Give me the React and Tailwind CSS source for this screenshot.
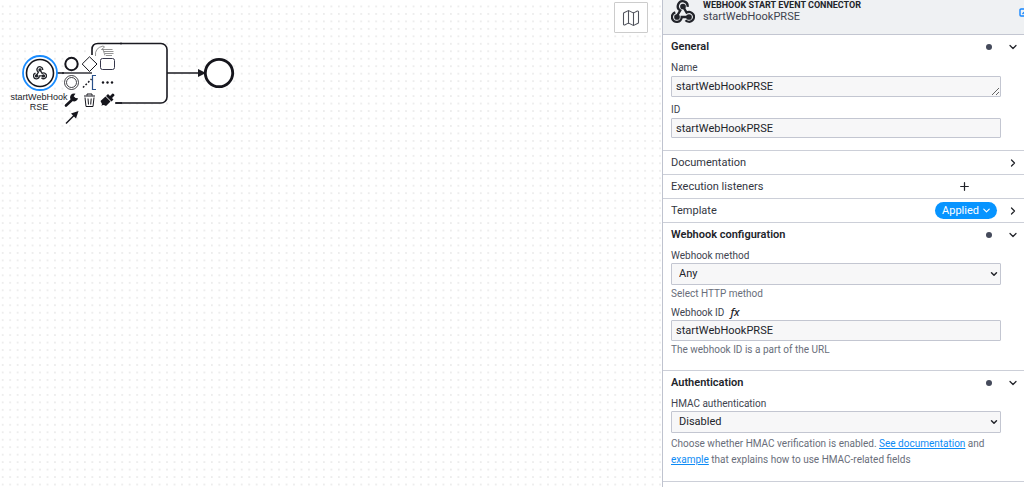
import { ChevronDown, ChevronRight, Plus, Map } from "lucide-react";

const fieldClass =
  "block w-full rounded-[1px] border border-[#c3c6d1] bg-[#f7f7f8] text-[11px] text-[#22242a] outline-none";
const rowClass = "flex h-6 items-center border-b border-[#cccfd8] pl-2 text-[11px]";
const rowTextClass = "flex-1 pt-[2px] text-[#33363f]";
const linkClass = "text-[#0d8bf5] underline";

function WebhookIcon({ className }) {
  return (
    <svg className={className} viewBox="0 0 24 24" fill="none" stroke="currentColor" strokeWidth="2.3" aria-hidden="true">
      <path d="M16.6 6.8A4.9 4.9 0 1 0 9.3 10.4L6 16" />
      <path d="M12 6.5L15.6 12.6A4.9 4.9 0 1 1 14.5 20.2" />
      <path d="M18 17H10.7A4.9 4.9 0 1 1 4.3 12.4" />
      <circle cx="12" cy="6.5" r="1.7" fill="currentColor" />
      <circle cx="6" cy="17" r="1.7" fill="currentColor" />
      <circle cx="18" cy="17" r="1.7" fill="currentColor" />
    </svg>
  );
}

function DotGrid() {
  return (
    <svg className="absolute inset-0 size-full" aria-hidden="true">
      <defs>
        <pattern id="grid-dots" x="-1" y="2.700" width="7.470" height="7.470" patternUnits="userSpaceOnUse">
          <circle cx="3.700" cy="3.700" r=".65" fill="#d0d0d0" />
        </pattern>
      </defs>
      <rect width="100%" height="100%" fill="url(#grid-dots)" />
    </svg>
  );
}

function Diagram() {
  return (
    <svg className="absolute left-0 top-0" width="260" height="130" viewBox="0 0 260 130" role="img" aria-label="Process diagram">
      <rect x="92" y="43.500" width="75" height="59.500" rx="6" fill="#fff" stroke="#1b1b22" strokeWidth="1.600" />
      <path d="M54 73H92M167 73H200" stroke="#1b1b22" strokeWidth="1.500" />
      <path d="M198 69L206 73L198 77Z" fill="#1b1b22" />
      <circle cx="219" cy="73" r="13.700" fill="#fff" stroke="#15151c" strokeWidth="2.800" />
      <circle cx="40" cy="73" r="17" fill="#fff" stroke="#1a8cff" strokeWidth="1.800" />
      <circle cx="40" cy="73" r="13.500" fill="#fff" stroke="#15151c" strokeWidth="1.600" />
    </svg>
  );
}

function ContextPad() {
  return (
    <svg className="absolute left-[62px] top-[42px]" width="60" height="84" viewBox="62 42 60 84" fill="none" stroke="#15151c" aria-label="Element tools" role="img">
      <path d="M88 40H120V90H115V110H64V56H88Z" fill="#fff" stroke="none" />
      <path d="M92 55V49.500Q92 43.500 98 43.500H122M116 103H122" strokeWidth="1.600" />
      <path d="M62 73H92" strokeWidth="1.300" />
      <path d="M95.500 56Q94.500 48 103 46L104.500 47L101.500 49.500H112.500M104 51.500H113.500M105 53.500H113.500M106 55.500H112M103 49.500L105 55.500" stroke="#666" strokeWidth=".7" />
      <circle cx="71.500" cy="64" r="6.200" fill="#fff" strokeWidth="2" />
      <path d="M89.500 56.800L97 64L89.500 71.500L82.200 64Z" fill="#fff" />
      <rect x="100.500" y="58.500" width="14" height="11" rx="2" fill="#fff" stroke="#35364a" />
      <circle cx="71.500" cy="82.500" r="7" fill="#fff" strokeWidth=".8" />
      <circle cx="71.500" cy="82.500" r="5" strokeWidth=".8" />
      <path d="M83 87.500L91.500 79" strokeDasharray="1.800 1.800" strokeWidth="1.500" />
      <path d="M96 75.500H92.500V89.500H96" stroke="#28508a" strokeWidth="1.200" />
      <g fill="#15151c" stroke="none">
        <circle cx="103" cy="82.500" r="1.200" />
        <circle cx="107.500" cy="82.500" r="1.200" />
        <circle cx="112" cy="82.500" r="1.200" />
      </g>
      <path d="M66 105.500L73 99" strokeWidth="2.600" strokeLinecap="round" />
      <path d="M75.500 93.700A4 4 0 1 0 78 98.200L75.500 98L73.700 96.200Z" fill="#15151c" stroke="none" />
      <path d="M84 96H95M87 95.500V94H92V95.500M85 97.500L86 106.500H93L94 97.500M88 98.500L88.500 104.500M91.200 98.500L90.700 104.500" />
      <path d="M100.500 101L105.500 96.500L110.500 101.500L106 106Q103 104 101.500 106Q102.500 103.500 100.500 101Z" fill="#15151c" stroke="none" />
      <path d="M106 96L108 94L110 96L112.500 93.500Q114.500 93.500 114.500 95.500L112 98L113.500 99.500L111.500 101.500Z" fill="#15151c" stroke="none" />
      <path d="M66 123.500L75 114.500" strokeWidth="1.400" />
      <path d="M78.500 111L76 118.500L71 113.500Z" fill="#15151c" stroke="none" />
    </svg>
  );
}

function Dot() {
  return <span className="size-[6px] rounded-full bg-[#454a5b]" />;
}

function OpenGroup({ title, className, children }) {
  return (
    <section className={"border-b border-[#cccfd8] pl-2 " + className}>
      <div className="flex h-6 items-center pr-[5px]">
        <h2 className="flex-1 text-[11px] font-semibold text-[#22242a]">{title}</h2>
        <Dot />
        <button aria-label={"Collapse " + title} className="ml-[15px]">
          <ChevronDown size={12} strokeWidth={2.5} />
        </button>
      </div>
      <div className="pr-[23px]">{children}</div>
    </section>
  );
}

function Label({ htmlFor, children }) {
  return <label htmlFor={htmlFor} className="block h-4 text-[10px] leading-[17px] text-[#40444f]">{children}</label>;
}

function Select({ id, value }) {
  return (
    <div className="relative">
      <select id={id} defaultValue={value} className={fieldClass + " h-[22px] appearance-none px-[7px] pt-[1px]"}>
        <option>{value}</option>
      </select>
      <ChevronDown size={10} strokeWidth={3.5} className="pointer-events-none absolute right-[2px] top-[6px]" />
    </div>
  );
}

export default function App() {
  return (
    <div className="flex h-screen overflow-hidden bg-white font-['Roboto',sans-serif] text-[#22242a]">
      <main className="relative min-w-0 flex-1">
        <DotGrid />
        <Diagram />
        <WebhookIcon className="absolute left-[33px] top-[66px] size-[14px]" />
        <ContextPad />
        <p className="absolute left-[9px] top-[92px] w-[60px] text-center font-['Liberation_Sans',sans-serif] text-[9px] leading-[10px]">startWebHook RSE</p>
        <button aria-label="Toggle minimap" className="absolute right-[14px] top-[2px] flex h-[31px] w-[34px] items-center justify-center rounded-[1px] border border-[#ccc] bg-white text-[#50535c]">
          <Map size={20} strokeWidth={1.3} />
        </button>
      </main>
      <aside className="w-[362px] shrink-0 border-l border-[#bfc3cf] bg-white">
        <header className="flex h-[35px] items-start gap-2 border-b border-[#c3c6d1] bg-[#eff1f3] pl-2">
          <WebhookIcon className="size-6 shrink-0" />
          <div className="min-w-0 flex-1">
            <div className="text-[9px] font-bold leading-[11px]">WEBHOOK START EVENT CONNECTOR</div>
            <div className="text-[11px] leading-[12px] text-[#40444f]">startWebHookPRSE</div>
          </div>
          <a href="#docs" aria-label="Open documentation" className="-mr-[4px] mt-2 block size-[9px] text-[#1687ff]">
            <svg viewBox="0 0 9 9" fill="none" stroke="currentColor" aria-hidden="true">
              <path d="M5 1H2Q1 1 1 2V7Q1 8 2 8H7M3.500 6L8 1.500" strokeWidth="1.400" />
            </svg>
          </a>
        </header>
        <OpenGroup title="General" className="h-[116px]">
          <Label htmlFor="name">Name</Label>
          <textarea id="name" defaultValue="startWebHookPRSE" rows={1} className={fieldClass + " mt-[1px] h-[21px] resize-y overflow-hidden px-1 py-[2px] leading-4"} />
          <div className="h-1" />
          <Label htmlFor="id">ID</Label>
          <input id="id" defaultValue="startWebHookPRSE" className={fieldClass + " mt-[1px] h-5 px-1"} />
        </OpenGroup>
        <div className={rowClass + " pr-[5px]"}>
          <span className={rowTextClass}>Documentation</span>
          <button aria-label="Expand Documentation"><ChevronRight size={12} strokeWidth={2.5} /></button>
        </div>
        <div className={rowClass + " pr-[53px]"}>
          <span className={rowTextClass}>Execution listeners</span>
          <button aria-label="Add execution listener"><Plus size={13} strokeWidth={2.3} /></button>
        </div>
        <div className={rowClass + " pr-[5px]"}>
          <span className={rowTextClass}>Template</span>
          <button className="mr-[10px] flex h-[17px] items-center gap-[2px] rounded-full bg-[#0794ff] pl-[7px] pr-[5px] text-white">
            <span className="pt-[1px]">Applied</span>
            <ChevronDown size={11} strokeWidth={2.5} />
          </button>
          <button aria-label="Expand Template"><ChevronRight size={12} strokeWidth={2.5} /></button>
        </div>
        <OpenGroup title="Webhook configuration" className="h-[148px]">
          <Label htmlFor="method">Webhook method</Label>
          <Select id="method" value="Any" />
          <p className="h-[19px] text-[10px] leading-[18px] text-[#696e7a]">Select HTTP method</p>
          <div className="flex items-center gap-[6px]">
            <Label htmlFor="webhook">Webhook ID</Label>
            <button aria-label="Use expression" className="h-4 font-['Noto_Sans',sans-serif] text-[11px] font-medium italic leading-[14px]">fx</button>
          </div>
          <input id="webhook" defaultValue="startWebHookPRSE" className={fieldClass + " h-[21px] px-1"} />
          <p className="text-[10px] leading-[18px] text-[#696e7a]">The webhook ID is a part of the URL</p>
        </OpenGroup>
        <OpenGroup title="Authentication" className="h-[111px]">
          <Label htmlFor="hmac">HMAC authentication</Label>
          <Select id="hmac" value="Disabled" />
          <p className="pt-[3px] text-[10px] leading-4 text-[#696e7a]">
            Choose whether HMAC verification is enabled. <a href="#documentation" className={linkClass}>See documentation</a> and <a href="#example" className={linkClass}>example</a> that explains how to use HMAC-related fields
          </p>
        </OpenGroup>
      </aside>
    </div>
  );
}
